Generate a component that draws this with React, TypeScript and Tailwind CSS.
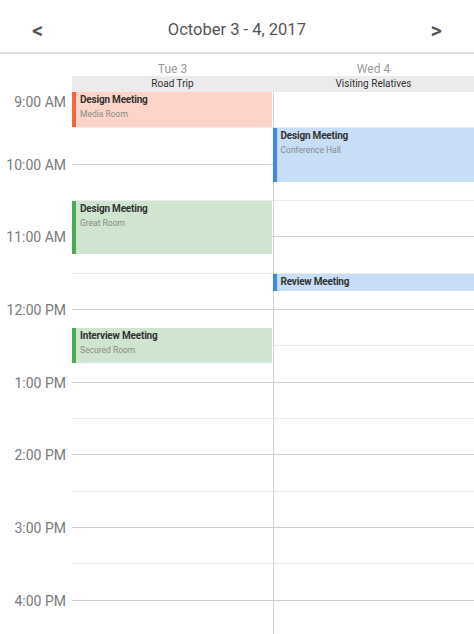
import React from 'react';

type CalEvent = {
  title: string;
  place?: string;
  top: number;
  height: number;
  tone: 'red' | 'blue' | 'green';
};

const HALF = 36.33;

const tones = {
  red: 'bg-[#fdd5c8] border-[#f2673b]',
  blue: 'bg-[#c8ddf6] border-[#3b8be2]',
  green: 'bg-[#cfe5d0] border-[#4fa856]',
};

const tueEvents: CalEvent[] = [
  { title: 'Design Meeting', place: 'Media Room', top: 0, height: 1, tone: 'red' },
  { title: 'Design Meeting', place: 'Great Room', top: 3, height: 1.5, tone: 'green' },
  { title: 'Interview Meeting', place: 'Secured Room', top: 6.5, height: 1, tone: 'green' },
];

const wedEvents: CalEvent[] = [
  { title: 'Design Meeting', place: 'Conference Hall', top: 1, height: 1.5, tone: 'blue' },
  { title: 'Review Meeting', top: 5, height: 0.5, tone: 'blue' },
];

const hours = ['9:00 AM', '10:00 AM', '11:00 AM', '12:00 PM', '1:00 PM', '2:00 PM', '3:00 PM', '4:00 PM'];

const EventBox = ({ ev, wed }: { ev: CalEvent; wed?: boolean }) => (
  <div
    className={`absolute border-l-4 pl-[4px] overflow-hidden ${tones[ev.tone]} ${wed ? 'left-[-1px] right-0' : 'left-0 right-[1px]'}`}
    style={{ top: ev.top * HALF, height: ev.height * HALF - 1 }}
  >
    <div className="text-[10px] font-bold leading-[14px] text-[#333] mt-[1px] tracking-[-0.2px]">{ev.title}</div>
    {ev.place && <div className="text-[8.5px] leading-[12px] mt-[1px] text-[#8a8a8a]">{ev.place}</div>}
  </div>
);

const GridLines = () => (
  <div className="flex flex-col">
    {Array.from({ length: 16 }).map((_, i) => (
      <div
        key={i}
        className={`shrink-0 border-b ${i % 2 === 0 ? 'border-[#ececec]' : 'border-[#cfcfcf]'}`}
        style={{ height: HALF }}
      />
    ))}
  </div>
);

export default function App() {
  return (
    <div className="w-[474px] h-[634px] overflow-hidden bg-white font-['Roboto',sans-serif]">
      <div className="h-[54px] flex items-center justify-between px-[32px] border-b-2 border-[#dddddd]">
        <span className="text-[22px] text-[#555] font-medium leading-none pt-[9px]">&lt;</span>
        <span className="text-[16.5px] text-[#555] leading-none pt-[9px]">October 3 - 4, 2017</span>
        <span className="text-[22px] text-[#555] font-medium leading-none pt-[9px]">&gt;</span>
      </div>

      <div className="flex pl-[72px] h-[22px]">
        <div className="flex-1 text-center text-[12px] leading-[14px] pt-[8px] text-[#9a9a9a]">Tue 3</div>
        <div className="flex-1 text-center text-[12px] leading-[14px] pt-[8px] text-[#9a9a9a]">Wed 4</div>
      </div>

      <div className="flex pl-[72px]">
        <div className="flex-1 h-[16px] bg-[#ebebeb] text-center text-[10px] leading-[16px] text-[#333]">Road Trip</div>
        <div className="flex-1 h-[16px] bg-[#ebebeb] text-center text-[10px] leading-[16px] text-[#333]">Visiting Relatives</div>
      </div>

      <div className="flex">
        <div className="w-[72px] shrink-0 flex flex-col">
          {hours.map((h, i) => (
            <div key={h} className="shrink-0 relative" style={{ height: HALF * 2 }}>
              <div
                className={`absolute right-[6px] text-[14px] leading-[16px] text-[#7a7a7a] ${i === 0 ? 'top-[2px]' : 'top-[-8px]'}`}
              >
                {h}
              </div>
            </div>
          ))}
        </div>
        <div className="flex-1 relative">
          <GridLines />
          {tueEvents.map((ev, i) => (
            <EventBox key={i} ev={ev} />
          ))}
        </div>
        <div className="flex-1 relative border-l border-[#d4d4d4]">
          <GridLines />
          {wedEvents.map((ev, i) => (
            <EventBox key={i} ev={ev} wed />
          ))}
        </div>
      </div>
    </div>
  );
}
